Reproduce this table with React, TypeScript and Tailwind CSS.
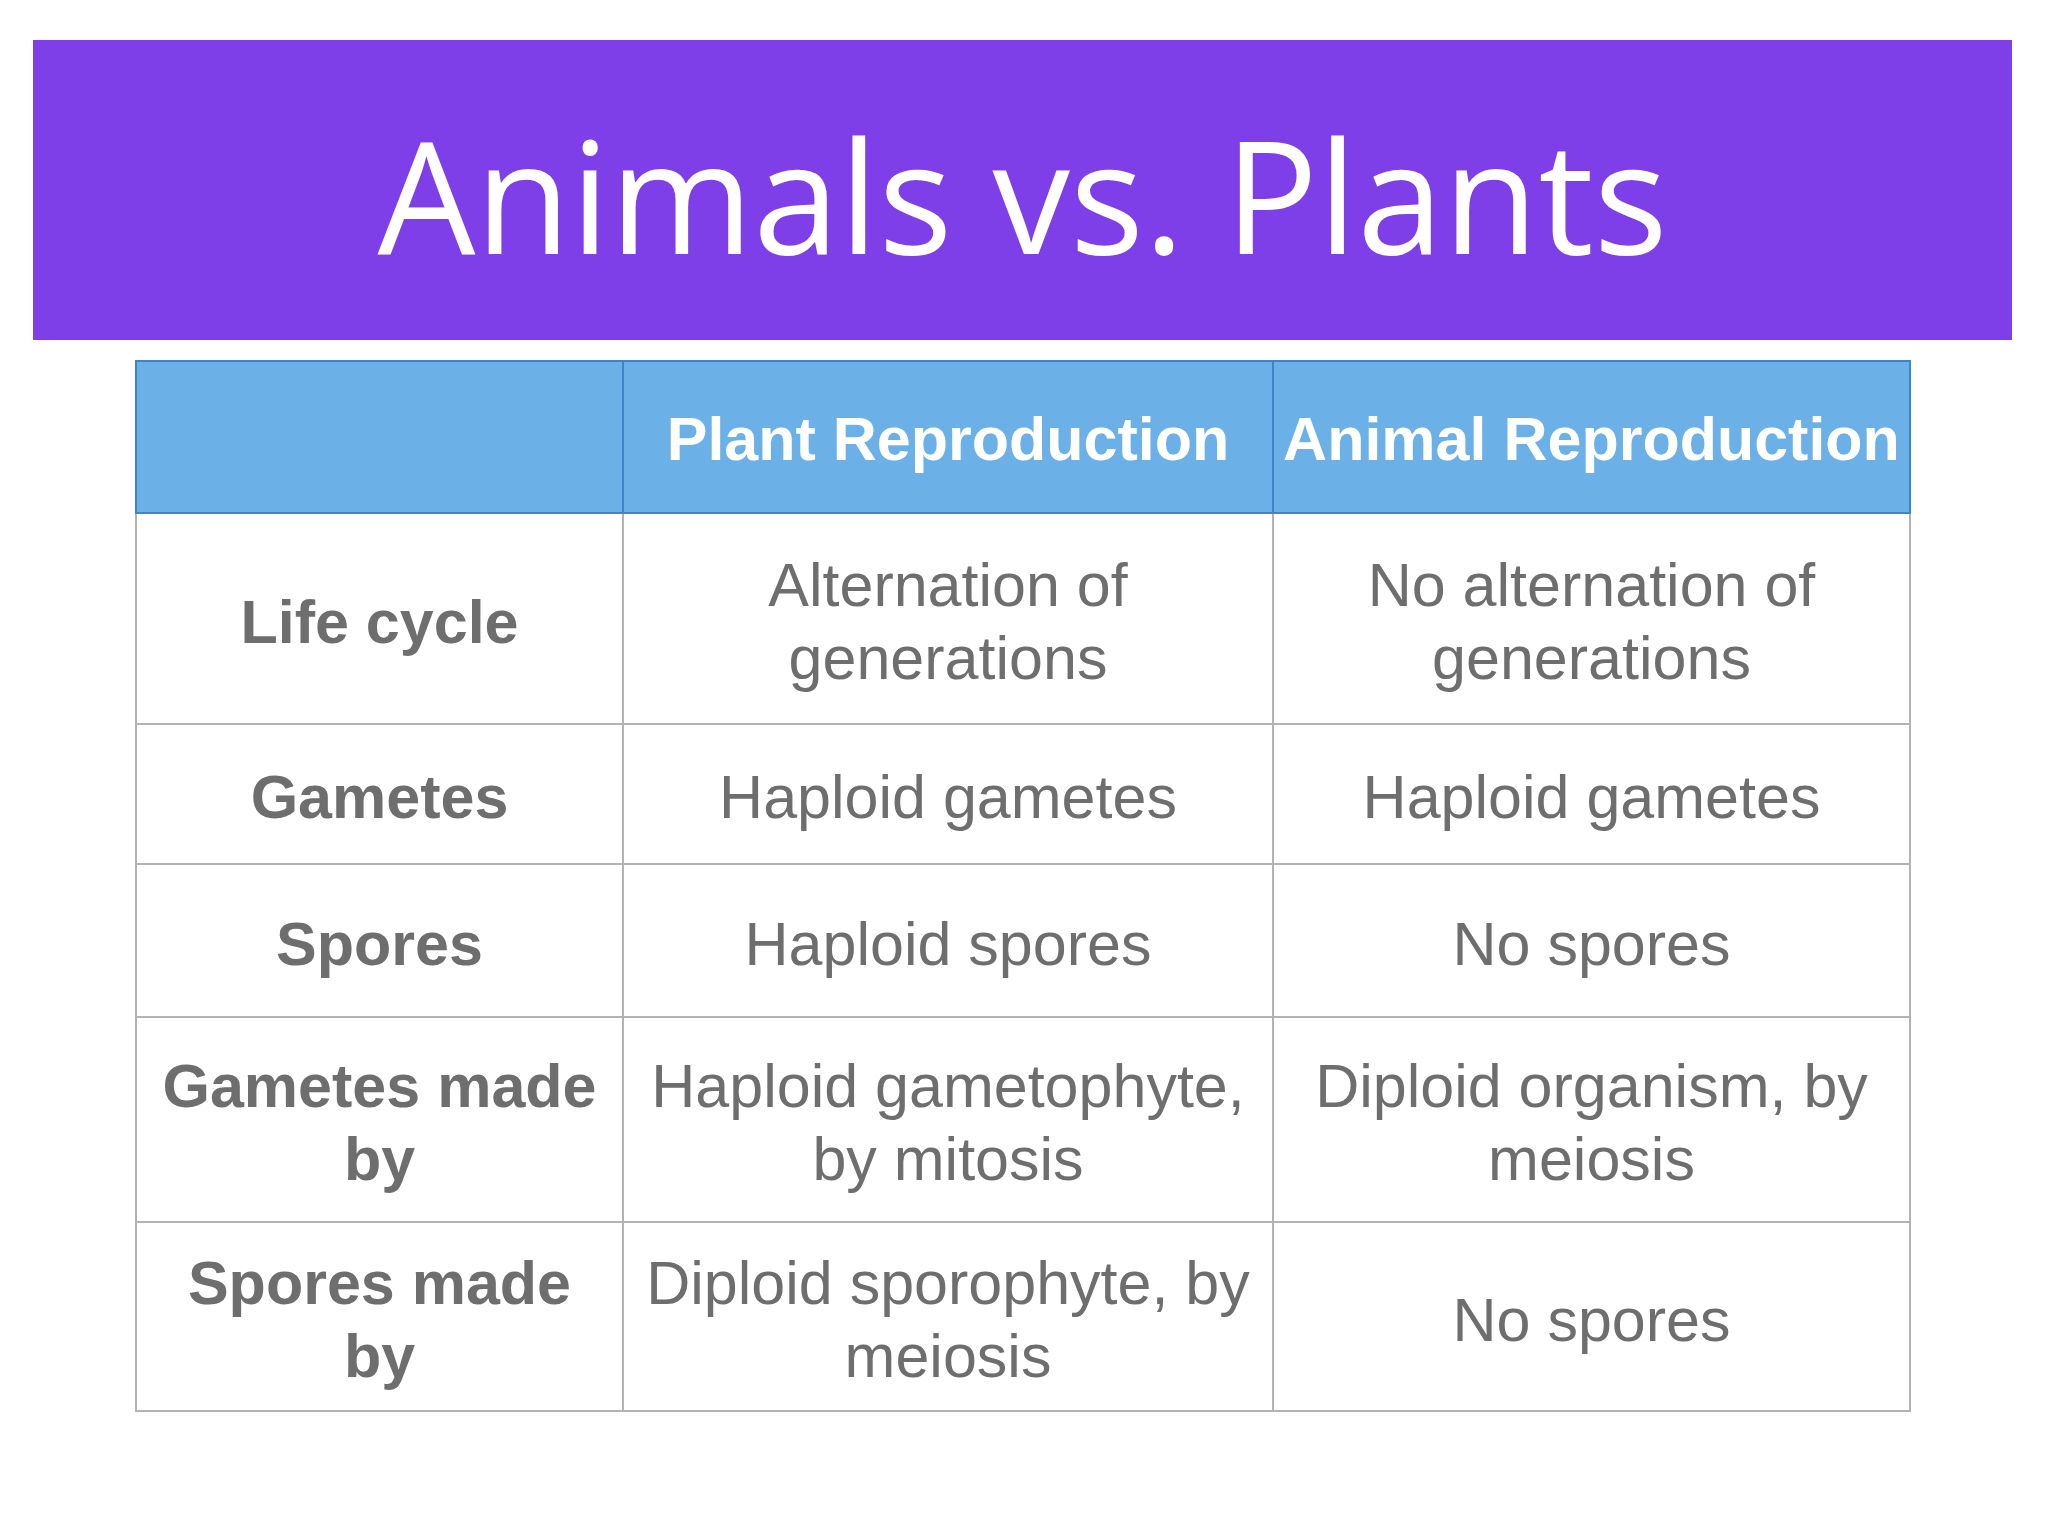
type Row = {
  label: string[];
  plant: string[];
  animal: string[];
  h: string;
};

const rows: Row[] = [
  { label: ["Life cycle"], plant: ["Alternation of", "generations"], animal: ["No alternation of", "generations"], h: "h-[211px]" },
  { label: ["Gametes"], plant: ["Haploid gametes"], animal: ["Haploid gametes"], h: "h-[140px]" },
  { label: ["Spores"], plant: ["Haploid spores"], animal: ["No spores"], h: "h-[153px]" },
  { label: ["Gametes made", "by"], plant: ["Haploid gametophyte,", "by mitosis"], animal: ["Diploid organism, by", "meiosis"], h: "h-[205px]" },
  { label: ["Spores made", "by"], plant: ["Diploid sporophyte, by", "meiosis"], animal: ["No spores"], h: "h-[189px]" },
];

function Lines({ lines }: { lines: string[] }) {
  return (
    <>
      {lines.map((l, i) => (
        <span key={i} className="block whitespace-nowrap">
          {l}
        </span>
      ))}
    </>
  );
}

export default function App() {
  return (
    <div className="min-h-[1536px] w-[2048px] bg-white pt-[40px]">
      {/* title bar */}
      <div className="ml-[33px] flex h-[300px] w-[1979px] items-center justify-center bg-[#7f3fe8] pt-[6px]">
        <h1
          className="text-[155px] leading-none font-normal text-white"
          style={{ fontFamily: '"Open Sans", sans-serif' }}
        >
          Animals vs. Plants
        </h1>
      </div>

      <div className="mt-[20px] ml-[135px]">
        <table
          className="w-[1774px] table-fixed border-collapse text-center text-[61px] leading-[73px] text-[#6e6e6e]"
          style={{ fontFamily: '"Liberation Sans", Arial, sans-serif' }}
        >
          <colgroup>
            <col className="w-[487px]" />
            <col className="w-[650px]" />
            <col className="w-[637px]" />
          </colgroup>
          <thead>
            <tr className="h-[152px] bg-[#6bb0e7]">
              <th className="border-2 border-[#3f83c9]" />
              <th className="border-2 border-[#3f83c9] px-2 pt-[5px] text-[61px] font-bold text-white">
                Plant Reproduction
              </th>
              <th className="border-2 border-[#3f83c9] px-1 pt-[5px] text-[61px] font-bold whitespace-nowrap text-white">
                Animal Reproduction
              </th>
            </tr>
          </thead>
          <tbody>
            {rows.map((r) => (
              <tr key={r.label.join(" ")} className={r.h}>
                <td className="border-2 border-[#b3b3b3] px-4 pt-[7px] font-bold">
                  <Lines lines={r.label} />
                </td>
                <td className="border-2 border-[#b3b3b3] px-4 pt-[7px]">
                  <Lines lines={r.plant} />
                </td>
                <td className="border-2 border-[#b3b3b3] px-4 pt-[7px]">
                  <Lines lines={r.animal} />
                </td>
              </tr>
            ))}
          </tbody>
        </table>
      </div>
    </div>
  );
}
